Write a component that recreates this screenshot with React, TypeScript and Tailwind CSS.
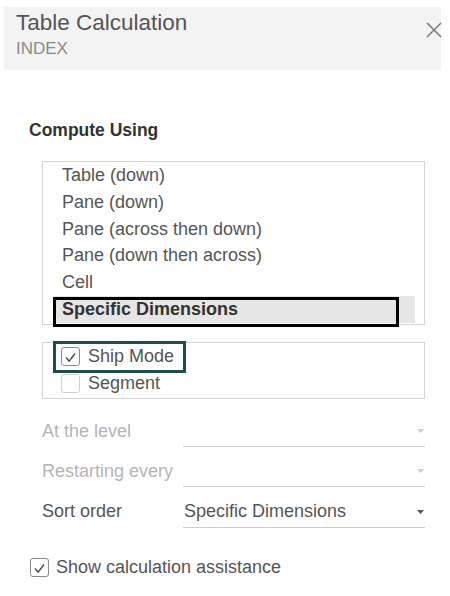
import React from "react";

const CheckIcon: React.FC = () => (
  <svg width="19" height="19" viewBox="0 0 19 19" className="block">
    <path d="M4.5 9.5 L8 13.5 L14.5 5" fill="none" stroke="#444" strokeWidth="1.5" />
  </svg>
);

const Checkbox: React.FC<{ checked?: boolean; faint?: boolean }> = ({ checked, faint }) => (
  <span
    className={`flex w-[19px] h-[19px] rounded-[3px] border bg-white ${
      faint ? "border-[#cfcfcf]" : "border-[#8a8a8a]"
    }`}
  >
    {checked && <CheckIcon />}
  </span>
);

const Caret: React.FC<{ faint?: boolean }> = ({ faint }) => (
  <svg width="7" height="4" viewBox="0 0 7 4" className="block">
    <polygon points="0,0 7,0 3.5,4" fill={faint ? "#d2d2d2" : "#555"} />
  </svg>
);

const options = [
  "Table (down)",
  "Pane (down)",
  "Pane (across then down)",
  "Pane (down then across)",
  "Cell",
];

const fields = [
  { label: "At the level", value: "", faint: true },
  { label: "Restarting every", value: "", faint: true },
  { label: "Sort order", value: "Specific Dimensions", faint: false },
];

export default function App() {
  return (
    <div className="relative w-[450px] h-[596px] bg-white font-['Liberation_Sans',Arial,sans-serif] text-[#555]">
      {/* Header */}
      <div className="ml-[4px] mt-[7px] w-[437px] h-[63px] bg-[#f3f3f3] pl-[12px] pt-[3px]">
        <div className="text-[22.5px] leading-[26px] text-[#555]">Table Calculation</div>
        <div className="mt-[3px] text-[17px] leading-[20px] text-[#8a8a8a]">INDEX</div>
      </div>
      <svg className="absolute left-[426px] top-[15px]" width="16" height="16" viewBox="0 0 16 16">
        <path d="M1 1 L15 15 M15 1 L1 15" stroke="#7a7a7a" strokeWidth="1.5" />
      </svg>

      {/* Compute Using */}
      <div className="ml-[29px] mt-[50px] text-[17.5px] leading-[20px] font-bold text-[#333]">
        Compute Using
      </div>

      <div className="ml-[42px] mt-[21px] w-[383px] h-[164px] border border-[#d6d6d6] pl-[11px] pr-[9px]">
        {options.map((o) => (
          <div key={o} className="pl-[8px] text-[18px] leading-[26.8px]">
            {o}
          </div>
        ))}
        <div className="relative bg-[#e6e6e6] pl-[8px] text-[18px] leading-[26.8px] font-bold text-[#333]">
          Specific Dimensions
          <div className="absolute left-[-1px] top-[1px] w-[346px] h-[30px] border-[3px] border-black" />
        </div>
      </div>

      {/* Dimensions */}
      <div className="ml-[42px] mt-[17px] w-[383px] h-[57px] border border-[#d6d6d6] pl-[18px]">
        <div className="relative flex items-center gap-[8px] h-[27px] text-[18px]">
          <Checkbox checked />
          <span>Ship Mode</span>
          <div className="absolute left-[-8px] top-[-2px] w-[133px] h-[32px] border-[3px] border-[#1e4d4b]" />
        </div>
        <div className="flex items-center gap-[8px] h-[27px] text-[18px]">
          <Checkbox faint />
          <span>Segment</span>
        </div>
      </div>

      {/* Fields */}
      <div className="ml-[42px] mt-[17px] w-[383px] flex flex-col gap-[9px]">
        {fields.map((f) => (
          <div key={f.label} className="flex text-[18px] leading-[31px]">
            <div className={`w-[141px] ${f.faint ? "text-[#b5b5b5]" : "text-[#555]"}`}>{f.label}</div>
            <div className="flex-1 flex items-center justify-between border-b border-[#cfcfcf] pl-[1px] pr-[1px]">
              <span>{f.value}</span>
              <Caret faint={f.faint} />
            </div>
          </div>
        ))}
      </div>

      {/* Show calculation assistance */}
      <div className="ml-[30px] mt-[25px] flex items-center gap-[7px] h-[28px] text-[18px]">
        <Checkbox checked />
        <span>Show calculation assistance</span>
      </div>
    </div>
  );
}
